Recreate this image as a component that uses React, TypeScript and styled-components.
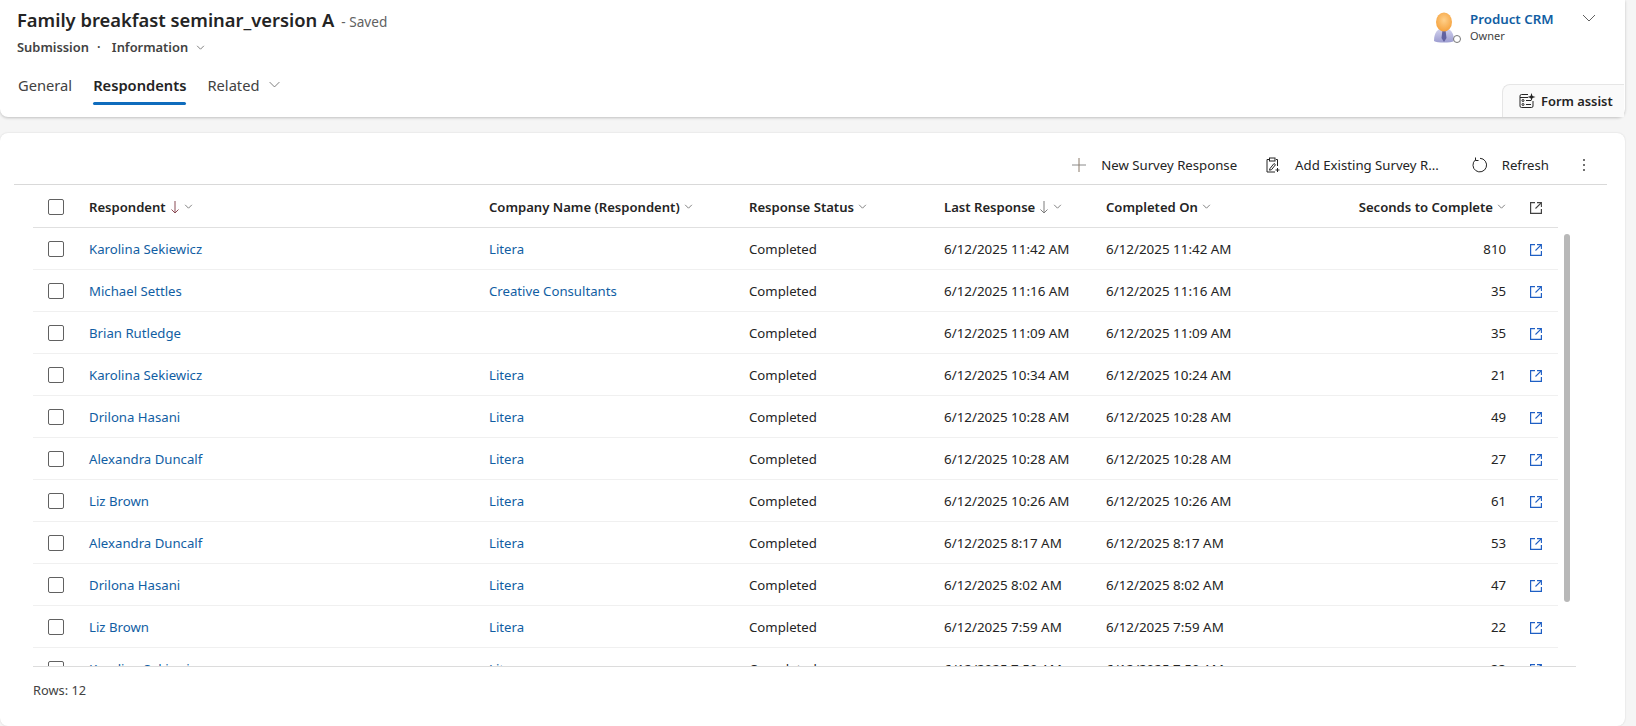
import React from 'react';
import styled, { createGlobalStyle } from 'styled-components';

const GlobalStyle = createGlobalStyle`
  html, body { margin: 0; padding: 0; height: 100%; background: #f5f5f5; }
  body { font-family: "Noto Sans", "Open Sans", sans-serif; color: #242424; overflow: hidden; }
  #root { height: 100%; }
`;

interface Respondent {
  name: string;
  company: string;
  last: string;
  done: string;
  secs: number;
}

const rows: Respondent[] = [
  { name: 'Karolina Sekiewicz', company: 'Litera', last: '6/12/2025 11:42 AM', done: '6/12/2025 11:42 AM', secs: 810 },
  { name: 'Michael Settles', company: 'Creative Consultants', last: '6/12/2025 11:16 AM', done: '6/12/2025 11:16 AM', secs: 35 },
  { name: 'Brian Rutledge', company: '', last: '6/12/2025 11:09 AM', done: '6/12/2025 11:09 AM', secs: 35 },
  { name: 'Karolina Sekiewicz', company: 'Litera', last: '6/12/2025 10:34 AM', done: '6/12/2025 10:24 AM', secs: 21 },
  { name: 'Drilona Hasani', company: 'Litera', last: '6/12/2025 10:28 AM', done: '6/12/2025 10:28 AM', secs: 49 },
  { name: 'Alexandra Duncalf', company: 'Litera', last: '6/12/2025 10:28 AM', done: '6/12/2025 10:28 AM', secs: 27 },
  { name: 'Liz Brown', company: 'Litera', last: '6/12/2025 10:26 AM', done: '6/12/2025 10:26 AM', secs: 61 },
  { name: 'Alexandra Duncalf', company: 'Litera', last: '6/12/2025 8:17 AM', done: '6/12/2025 8:17 AM', secs: 53 },
  { name: 'Drilona Hasani', company: 'Litera', last: '6/12/2025 8:02 AM', done: '6/12/2025 8:02 AM', secs: 47 },
  { name: 'Liz Brown', company: 'Litera', last: '6/12/2025 7:59 AM', done: '6/12/2025 7:59 AM', secs: 22 },
  { name: 'Karolina Sekiewicz', company: 'Litera', last: '6/12/2025 7:50 AM', done: '6/12/2025 7:50 AM', secs: 33 },
];

const Chevron: React.FC<{ size?: number; color?: string }> = ({ size = 10, color = '#616161' }) => (
  <svg width={size} height={size} viewBox="0 0 16 16" fill="none">
    <path d="M2 5l6 6 6-6" stroke={color} strokeWidth={size > 12 ? 1 : 1.4} />
  </svg>
);

const SortArrow: React.FC<{ color: string }> = ({ color }) => (
  <svg width="10" height="14" viewBox="0 0 10 14" fill="none">
    <path d="M5 1v12M1.500 9.500L5 13l3.500-3.500" stroke={color} strokeWidth="1" />
  </svg>
);

const OpenIcon: React.FC<{ color: string }> = ({ color }) => (
  <svg width="12" height="12" viewBox="0 0 12 12" fill="none">
    <path d="M5 .6H.6v10.800h10.800V7" stroke={color} strokeWidth="1.200" />
    <path d="M7 .6h4.400V5M11.200.8L5.500 6.500" stroke={color} strokeWidth="1.100" />
  </svg>
);

const Avatar = () => (
  <svg width="30" height="34" viewBox="0 0 30 34">
    <defs>
      <radialGradient id="face" cx="50%" cy="40%" r="60%">
        <stop offset="0%" stopColor="#ffd08a" />
        <stop offset="100%" stopColor="#f5a23e" />
      </radialGradient>
      <linearGradient id="suit" x1="0" y1="0" x2="0" y2="1">
        <stop offset="0%" stopColor="#d5d5ef" />
        <stop offset="100%" stopColor="#9c9cd0" />
      </linearGradient>
    </defs>
    <path d="M3 31c0-9 4-13 10-13s10 4 10 13c-3 2-17 2-20 0z" fill="url(#suit)" />
    <path d="M11.500 20h3l1 8-2.500 4-2.500-4z" fill="#6262a0" />
    <ellipse cx="13" cy="12" rx="8" ry="9.500" fill="url(#face)" />
    <circle cx="26" cy="29" r="3.500" fill="#fff" stroke="#777" strokeWidth="1" />
  </svg>
);

const PlusIcon = () => (
  <svg width="14" height="14" viewBox="0 0 14 14">
    <path d="M0 7h14" stroke="#8a8a8a" strokeWidth="1" />
    <path d="M7 0v14" stroke="#8a7a6a" strokeWidth="1" />
  </svg>
);

const ClipboardIcon = () => (
  <svg width="14" height="16" viewBox="0 0 14 16" fill="none" stroke="#242424" strokeWidth="1">
    <path d="M3.500 2.500H1v12.500h8M10 2.500h1.500V9" />
    <rect x="3.500" y="1" width="5.500" height="3" />
    <path d="M4 11.500l4-5 1.500 1.200-4 5-2 .5z" />
    <path d="M11.500 11v4M9.500 13h4" />
  </svg>
);

const RefreshIcon = () => (
  <svg width="15" height="16" viewBox="0 0 15 16" fill="none" stroke="#242424" strokeWidth="1">
    <path d="M3.500 2.800A6.800 6.800 0 1 0 8 1.300" />
    <path d="M3.500 0.500v3h3" />
  </svg>
);

const FormAssistIcon = () => (
  <svg width="17" height="16" viewBox="0 0 17 16" fill="none" stroke="#242424" strokeWidth="1">
    <path d="M9 1.500H2.500a1.500 1.500 0 0 0-1.500 1.500v10a1.500 1.500 0 0 0 1.500 1.500h10a1.500 1.500 0 0 0 1.500-1.500V8" />
    <circle cx="4" cy="7.500" r="1" />
    <circle cx="4" cy="11.500" r="1" />
    <path d="M7 7.500h5M7 11.500h5M1 4.500h8" />
    <path d="M12.500 0l1 3 3 1-3 1-1 3-1-3-3-1 3-1z" fill="#242424" stroke="none" />
  </svg>
);

const Page = styled.div`
  height: 726px;
  display: flex;
  flex-direction: column;
  gap: 16px;
  padding-right: 11px;
`;

const HeaderCard = styled.header`
  height: 117px;
  background: #fff;
  border-radius: 0 0 8px 8px;
  box-shadow: 0 1px 3px rgba(0, 0, 0, 0.22);
  position: relative;
  display: flex;
  justify-content: space-between;
  flex: none;
`;

const TitleBlock = styled.div`
  padding: 6px 0 0 17px;
`;

const TitleRow = styled.div`
  display: flex;
  align-items: baseline;
  gap: 7px;
`;

const Title = styled.h1`
  margin: 0;
  font-size: 18.350px;
  font-weight: 600;
  line-height: 27px;
`;

const Saved = styled.span`
  font-size: 13.600px;
  color: #616161;
`;

const SubRow = styled.div`
  display: flex;
  align-items: center;
  gap: 8px;
  font-size: 12.900px;
  font-weight: 600;
  color: #424242;
  margin-top: 5px;
  line-height: 18px;
`;

const Tabs = styled.nav`
  display: flex;
  gap: 20px;
  margin-top: 16px;
`;

const Tab = styled.div<{ $active?: boolean }>`
  display: flex;
  align-items: center;
  gap: 8px;
  height: 25px;
  font-size: 14.700px;
  font-weight: ${(p) => (p.$active ? 600 : 400)};
  color: ${(p) => (p.$active ? '#242424' : '#424242')};
  position: relative;
  margin-left: 1px;
  &::after {
    content: '';
    display: ${(p) => (p.$active ? 'block' : 'none')};
    position: absolute;
    left: 0;
    right: 0;
    bottom: -8px;
    height: 3px;
    border-radius: 2px;
    background: #0f6cbd;
  }
`;

const OwnerBlock = styled.div`
  display: flex;
  padding: 10px 28px 0 0;
  height: fit-content;
`;

const OwnerText = styled.div`
  margin: 2px 28px 0 9px;
  width: 83px;
`;

const OwnerName = styled.div`
  font-size: 13.300px;
  font-weight: 600;
  color: #115ea3;
  line-height: 14px;
  white-space: nowrap;
`;

const OwnerRole = styled.div`
  font-size: 11px;
  color: #424242;
  line-height: 14px;
  margin-top: 3px;
`;

const AssistTab = styled.div`
  position: absolute;
  right: 1px;
  bottom: 0;
  width: 122px;
  height: 33px;
  box-sizing: border-box;
  background: #fafafa;
  border: 1px solid #e6e6e6;
  border-width: 1px 0 0 1px;
  border-radius: 8px 0 0 0;
  display: flex;
  align-items: center;
  gap: 5px;
  padding-left: 16px;
  font-size: 12.900px;
  font-weight: 600;
`;

const ListCard = styled.section`
  flex: 1;
  min-height: 0;
  background: #fff;
  border-radius: 8px;
  box-shadow: 0 0 2px rgba(0, 0, 0, 0.14);
  padding: 0 0 0 14px;
  display: flex;
  flex-direction: column;
  overflow: hidden;
`;

const Toolbar = styled.div`
  height: 52px;
  box-sizing: border-box;
  flex: none;
  margin-right: 18px;
  padding-top: 13px;
  border-bottom: 1px solid #d9d9d9;
  display: flex;
  align-items: center;
  justify-content: flex-end;
  font-size: 13.200px;
  color: #242424;
`;

const ToolButton = styled.div<{ $gap: number; $left: number }>`
  display: flex;
  align-items: center;
  gap: ${(p) => p.$gap}px;
  margin-left: ${(p) => p.$left}px;
  white-space: nowrap;
`;

const DotsButton = styled.div`
  margin: 0 21px 0 34px;
  width: 3px;
  display: flex;
  flex-direction: column;
  gap: 3px;
  & > i {
    display: block;
    width: 2px;
    height: 2px;
    background: #424242;
    border-radius: 50%;
  }
`;

const GridArea = styled.div`
  position: relative;
  height: 481px;
  flex: none;
  margin: 0 49px 0 19px;
  border-bottom: 1px solid #dcdcdc;
  overflow: hidden;
`;

const GridRow = styled.div<{ $head?: boolean }>`
  display: grid;
  grid-template-columns: 56px 400px 260px 195px 162px 130px 270px 1fr;
  align-items: center;
  height: ${(p) => (p.$head ? 43 : 42)}px;
  box-sizing: border-box;
  padding-top: 1px;
  border-bottom: 1px solid ${(p) => (p.$head ? '#e0e0e0' : '#f0f0f0')};
  margin-right: 18px;
  font-size: ${(p) => (p.$head ? 13.1 : 13.2)}px;
  font-weight: ${(p) => (p.$head ? 600 : 400)};
`;

const CheckCell = styled.div`
  padding-left: 15px;
  display: flex;
`;

const CheckBox = styled.span`
  display: block;
  width: 16px;
  height: 16px;
  box-sizing: border-box;
  border: 1px solid #616161;
  border-radius: 2px;
`;

const Cell = styled.div`
  white-space: nowrap;
  display: flex;
  align-items: center;
  gap: 4px;
`;

const DateCell = styled(Cell)`
  font-size: 13.400px;
`;

const NumCell = styled(Cell)`
  justify-content: flex-end;
`;

const LinkText = styled.span`
  color: #115ea3;
`;

const OpenCell = styled.div`
  padding: 2px 0 0 24px;
  display: flex;
`;

const ScrollThumb = styled.div`
  position: absolute;
  top: 49px;
  right: 6px;
  width: 6px;
  height: 368px;
  background: #b8b8b8;
  border-radius: 3px;
`;

const Footer = styled.div`
  padding: 14px 0 0 19px;
  font-size: 12.800px;
  color: #424242;
  line-height: 18px;
`;

const headers: { label: string; arrow?: string }[] = [
  { label: 'Respondent', arrow: '#8a4a55' },
  { label: 'Company Name (Respondent)' },
  { label: 'Response Status' },
  { label: 'Last Response', arrow: '#7d7d7d' },
  { label: 'Completed On' },
];

export default function App() {
  return (
    <>
      <GlobalStyle />
      <Page>
        <HeaderCard>
          <TitleBlock>
            <TitleRow>
              <Title>Family breakfast seminar_version A</Title>
              <Saved>- Saved</Saved>
            </TitleRow>
            <SubRow>
              <span>Submission</span>
              <span>·</span>
              <span>&nbsp;Information</span>
              <Chevron size={9} />
            </SubRow>
            <Tabs>
              <Tab>General</Tab>
              <Tab $active>Respondents</Tab>
              <Tab>
                Related <Chevron size={13} />
              </Tab>
            </Tabs>
          </TitleBlock>
          <OwnerBlock>
            <Avatar />
            <OwnerText>
              <OwnerName>Product CRM</OwnerName>
              <OwnerRole>Owner</OwnerRole>
            </OwnerText>
            <Chevron size={16} />
          </OwnerBlock>
          <AssistTab>
            <FormAssistIcon />
            Form assist
          </AssistTab>
        </HeaderCard>
        <ListCard>
          <Toolbar>
            <ToolButton $gap={15} $left={0}>
              <PlusIcon />
              New Survey Response
            </ToolButton>
            <ToolButton $gap={15} $left={29}>
              <ClipboardIcon />
              Add Existing Survey R...
            </ToolButton>
            <ToolButton $gap={15} $left={33}>
              <RefreshIcon />
              Refresh
            </ToolButton>
            <DotsButton>
              <i />
              <i />
              <i />
            </DotsButton>
          </Toolbar>
          <GridArea>
            <GridRow $head>
              <CheckCell>
                <CheckBox />
              </CheckCell>
              {headers.map((h) => (
                <Cell key={h.label}>
                  {h.label}
                  {h.arrow && <SortArrow color={h.arrow} />}
                  <Chevron size={9} />
                </Cell>
              ))}
              <NumCell>
                Seconds to Complete <Chevron size={9} />
              </NumCell>
              <OpenCell>
                <OpenIcon color="#424242" />
              </OpenCell>
            </GridRow>
            {rows.map((r, i) => (
              <GridRow key={i}>
                <CheckCell>
                  <CheckBox />
                </CheckCell>
                <Cell>
                  <LinkText>{r.name}</LinkText>
                </Cell>
                <Cell>
                  <LinkText>{r.company}</LinkText>
                </Cell>
                <Cell>Completed</Cell>
                <DateCell>{r.last}</DateCell>
                <DateCell>{r.done}</DateCell>
                <NumCell>{r.secs}</NumCell>
                <OpenCell>
                  <OpenIcon color="#1f5fc4" />
                </OpenCell>
              </GridRow>
            ))}
            <ScrollThumb />
          </GridArea>
          <Footer>Rows: 12</Footer>
        </ListCard>
      </Page>
    </>
  );
}
